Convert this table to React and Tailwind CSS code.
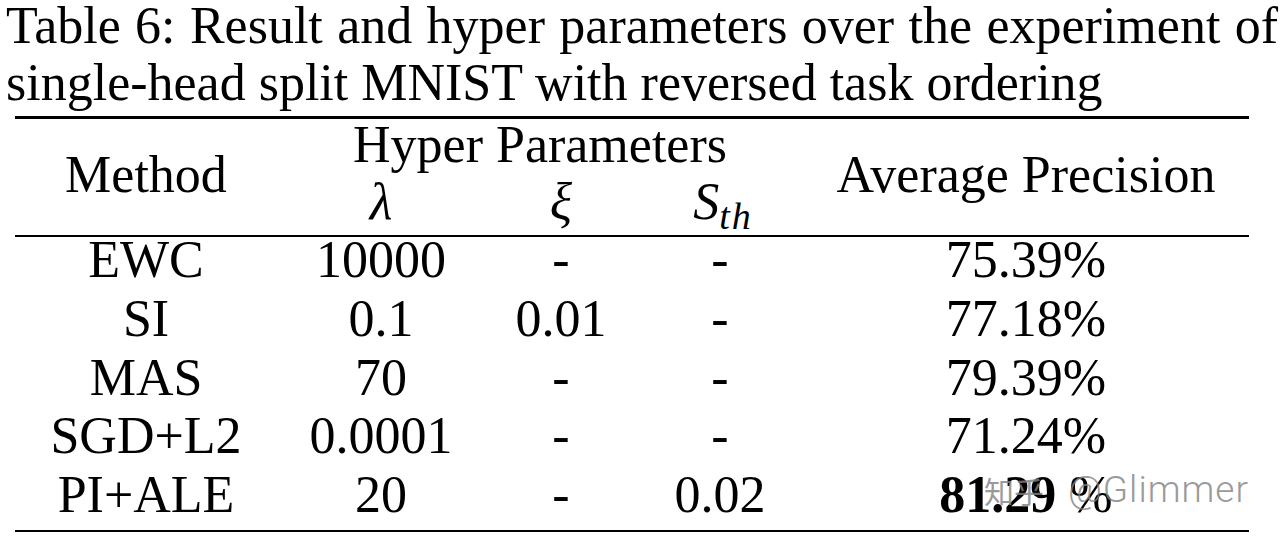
const rows = [
  { method: "EWC", lambda: "10000", xi: "-", sth: "-", ap: "75.39%" },
  { method: "SI", lambda: "0.1", xi: "0.01", sth: "-", ap: "77.18%" },
  { method: "MAS", lambda: "70", xi: "-", sth: "-", ap: "79.39%" },
  { method: "SGD+L2", lambda: "0.0001", xi: "-", sth: "-", ap: "71.24%" },
  { method: "PI+ALE", lambda: "20", xi: "-", sth: "0.02", ap: null },
];

const cols = "grid grid-cols-[262px_208px_152px_166px_446px]";

function Watermark() {
  return (
    <div className="absolute left-[181px] top-[5px] flex items-center gap-[24px] whitespace-nowrap text-[rgb(130,130,130)] opacity-80 pointer-events-none">
      <span className="font-['Noto_Sans_CJK_SC',sans-serif] text-[30px] leading-none">知乎</span>
      <span className="font-['Roboto',sans-serif] font-light text-[37px] leading-none tracking-[1px]">@Glimmer</span>
    </div>
  );
}

export default function App() {
  return (
    <div className="w-[1286px] h-[540px] overflow-hidden bg-white text-black font-['Liberation_Serif',serif]">
      <p className="ml-[6px] mt-[-3px] w-[1272px] text-[52px] leading-[57px] text-justify">
        Table 6: Result and hyper parameters over the experiment of single-head split MNIST with reversed task ordering
      </p>

      <div className="ml-[15px] mt-[5px] w-[1234px] text-[52px]">
        <div className="h-[3px] bg-black" />

        <div className={`${cols} grid-rows-[55px_56px] leading-[56px] text-center`}>
          <div className="row-span-2 flex items-center justify-center">Method</div>
          <div className="col-span-3 mt-[-2px]">Hyper Parameters</div>
          <div className="row-span-2 flex items-center justify-center">Average Precision</div>
          <div className="italic">λ</div>
          <div className="italic">ξ</div>
          <div className="italic pl-[6px]">
            S<sub className="text-[38px] tracking-[2px]">th</sub>
          </div>
        </div>

        <div className="mt-[5px] h-[2px] bg-black" />

        <div className="mt-[-6px] leading-[58.75px]">
          {rows.map((r) => (
            <div key={r.method} className={`${cols} text-center`}>
              <div>{r.method}</div>
              <div>{r.lambda}</div>
              <div>{r.xi}</div>
              <div>{r.sth}</div>
              <div className="relative">
                {r.ap ? (
                  r.ap
                ) : (
                  <>
                    <span className="font-bold">81.29</span> %
                    <Watermark />
                  </>
                )}
              </div>
            </div>
          ))}
        </div>

        <div className="mt-[5px] h-[2px] bg-black" />
      </div>
    </div>
  );
}
